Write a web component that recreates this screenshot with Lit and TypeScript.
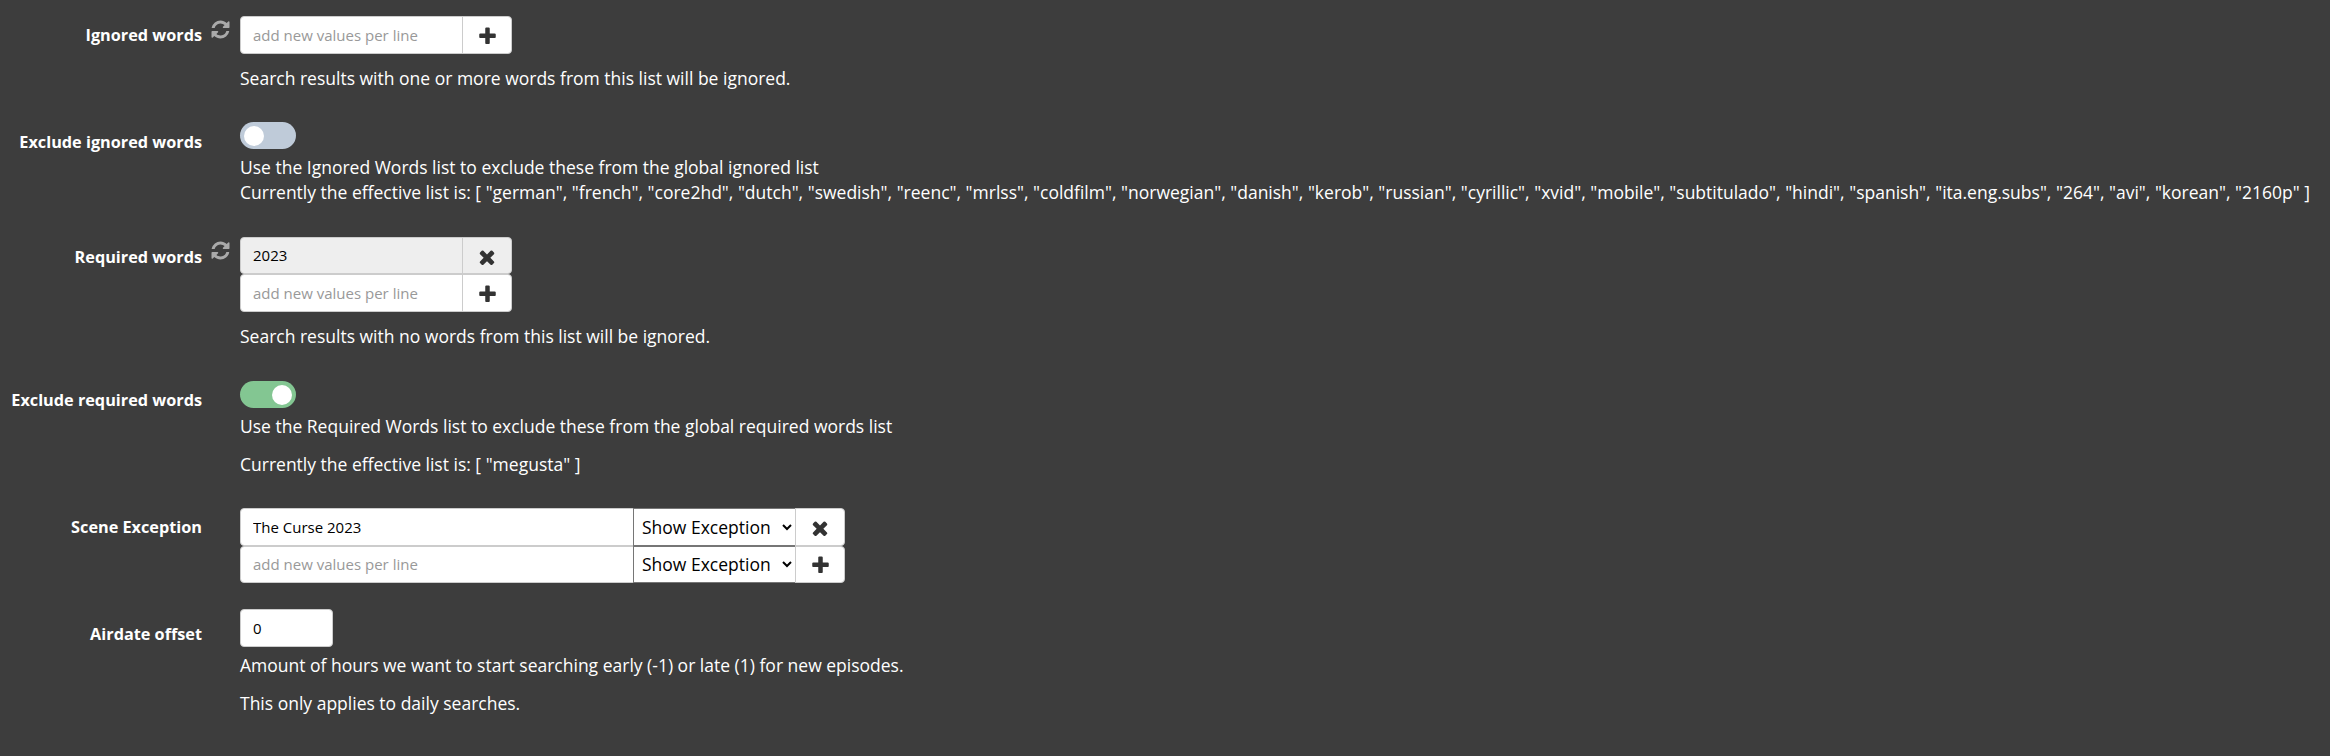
import { LitElement, html, css, svg } from "lit";
import { customElement } from "lit/decorators.js";

const PLUS = svg`<path d="M1600 736v192q0 40-28 68t-68 28h-416v416q0 40-28 68t-68 28h-192q-40 0-68-28t-28-68v-416h-416q-40 0-68-28t-28-68v-192q0-40 28-68t68-28h416v-416q0-40 28-68t68-28h192q40 0 68 28t28 68v416h416q40 0 68 28t28 68z"/>`;
const TIMES = svg`<path d="M1490 1322q0 40-28 68l-136 136q-28 28-68 28t-68-28l-294-294-294 294q-28 28-68 28t-68-28l-136-136q-28-28-28-68t28-68l294-294-294-294q-28-28-28-68t28-68l136-136q28-28 68-28t68 28l294 294 294-294q28-28 68-28t68 28l136 136q28 28 28 68t-28 68l-294 294 294 294q28 28 28 68z"/>`;
const REFRESH = svg`<path d="M1639 1056q0 5-1 7-64 268-268 434.5t-478 166.5q-146 0-282.5-55t-243.5-157l-129 129q-19 19-45 19t-45-19-19-45v-448q0-26 19-45t45-19h448q26 0 45 19t19 45-19 45l-137 137q71 66 161 102t187 36q134 0 250-65t186-179q11-17 53-117 8-23 30-23h192q13 0 22.5 9.5t9.5 22.5zm25-800v448q0 26-19 45t-45 19h-448q-26 0-45-19t-19-45 19-45l138-138q-148-137-349-137-134 0-250 65t-186 179q-11 17-53 117-8 23-30 23h-199q-13 0-22.5-9.5t-9.5-22.5v-7q65-268 270-434.5t480-166.5q146 0 284 55.5t245 156.5l130-129q19-19 45-19t45 19 19 45z"/>`;

const icon = (p: unknown, cls = "") => html`<svg class="ico ${cls}" viewBox="0 0 1792 1792" fill="currentColor">${p}</svg>`;

@customElement("app-root")
export class AppRoot extends LitElement {
  static styles = css`
    :host {
      display: block;
      min-height: 756px;
      background: #3d3d3d;
      color: #fff;
      font-family: "Open Sans", sans-serif;
      font-size: 17.5px;
      line-height: 25px;
      padding-top: 16px;
      box-sizing: border-box;
    }
    .row {
      display: grid;
      grid-template-columns: 202px 38px 1fr;
      margin-bottom: 31.5px;
    }
    .row.r3 { margin-bottom: 32.5px; }
    .row.r4 { margin-bottom: 31px; }
    .row.tight { margin-bottom: 26px; }
    .label {
      text-align: right;
      font-weight: 700;
      font-size: 16.25px;
      margin-top: 7px;
      white-space: nowrap;
    }
    .label.m8 { margin-top: 8px; }
    .label.low { margin-top: 12.5px; }
    .gutter { position: relative; color: #aaa; }
    .sync { position: absolute; left: 7.5px; top: 3px; width: 21px; height: 21px; }
    .sync .ico { display: block; width: 21px; height: 21px; }
    .stack { display: flex; flex-direction: column; width: 272px; }
    .stack.wide { width: 605px; }
    .group {
      display: flex;
      height: 37.5px;
      box-sizing: border-box;
      border-radius: 4px;
      background: #fff;
      border: 1px solid #ccc;
    }
    .group.filled { background: #eee; }
    .group input {
      flex: 1;
      min-width: 0;
      border: 0;
      outline: 0;
      padding: 0 12px;
      background: transparent;
      font: 15px "Open Sans", sans-serif;
      color: #000;
    }
    input::placeholder { color: #999; opacity: 1; }
    .group select {
      width: 162px;
      margin: -1px 0;
      border: 1px solid #767676;
      border-right: 0;
      border-radius: 0;
      background: #fff;
      color: #000;
      padding: 0 0 0 4px;
      font: 17.5px "Open Sans", sans-serif;
      outline: 0;
    }
    .btn {
      width: 49px;
      flex: none;
      display: flex;
      align-items: center;
      justify-content: center;
      border-left: 1px solid #ccc;
      color: #333;
      box-sizing: border-box;
      padding-top: 3px;
    }
    .btn .ico { width: 21px; height: 21px; }
    .btn .ico.x { width: 22px; height: 22px; }
    .help { margin: 12px 0 0; white-space: nowrap; }
    .help.near { margin-top: 6px; }
    .help.para { margin-top: 13px; }
    .help.line { margin-top: 0; }
    .toggle {
      width: 56px;
      height: 27px;
      border-radius: 14px;
      background: #bfcbd9;
      position: relative;
    }
    .toggle::after {
      content: "";
      position: absolute;
      top: 3.5px;
      left: 4px;
      width: 20px;
      height: 20px;
      border-radius: 50%;
      background: #fff;
    }
    .toggle.on { background: #83c692; }
    .toggle.on::after { left: 32px; }
    .offset {
      display: block;
      width: 93px;
      height: 38px;
      box-sizing: border-box;
      border: 1px solid #ccc;
      border-radius: 4px;
      background: #fff;
      padding: 0 12px;
      font: 15px "Open Sans", sans-serif;
      color: #000;
      outline: 0;
      appearance: textfield;
    }
  `;

  private words(values: string[]) {
    return html`<div class="stack">
      ${values.map(
        (v) => html`<div class="group filled"><input .value=${v} /><span class="btn">${icon(TIMES, "x")}</span></div>`
      )}
      <div class="group"><input placeholder="add new values per line" /><span class="btn">${icon(PLUS)}</span></div>
    </div>`;
  }

  private excRow(value: string, placeholder: string, ic: unknown, cls = "") {
    return html`<div class="group">
      <input .value=${value} placeholder=${placeholder} />
      <select><option>Show Exception</option></select>
      <span class="btn">${icon(ic, cls)}</span>
    </div>`;
  }

  render() {
    return html`
      <div class="row">
        <div class="label">Ignored words</div>
        <div class="gutter"><span class="sync">${icon(REFRESH)}</span></div>
        <div>
          ${this.words([])}
          <p class="help">Search results with one or more words from this list will be ignored.</p>
        </div>
      </div>
      <div class="row">
        <div class="label m8">Exclude ignored words</div>
        <div class="gutter"></div>
        <div>
          <div class="toggle"></div>
          <p class="help near">Use the Ignored Words list to exclude these from the global ignored list</p>
          <p class="help line">Currently the effective list is: [ "german", "french", "core2hd", "dutch", "swedish", "reenc", "mrlss", "coldfilm", "norwegian", "danish", "kerob", "russian", "cyrillic", "xvid", "mobile", "subtitulado", "hindi", "spanish", "ita.eng.subs", "264", "avi", "korean", "2160p" ]</p>
        </div>
      </div>
      <div class="row r3">
        <div class="label m8">Required words</div>
        <div class="gutter"><span class="sync">${icon(REFRESH)}</span></div>
        <div>
          ${this.words(["2023"])}
          <p class="help">Search results with no words from this list will be ignored.</p>
        </div>
      </div>
      <div class="row r4">
        <div class="label">Exclude required words</div>
        <div class="gutter"></div>
        <div>
          <div class="toggle on"></div>
          <p class="help near">Use the Required Words list to exclude these from the global required words list</p>
          <p class="help para">Currently the effective list is: [ "megusta" ]</p>
        </div>
      </div>
      <div class="row tight">
        <div class="label">Scene Exception</div>
        <div class="gutter"></div>
        <div class="stack wide">
          ${this.excRow("The Curse 2023", "", TIMES, "x")}
          ${this.excRow("", "add new values per line", PLUS)}
        </div>
      </div>
      <div class="row">
        <div class="label low">Airdate offset</div>
        <div class="gutter"></div>
        <div>
          <input class="offset" type="number" value="0" />
          <p class="help near">Amount of hours we want to start searching early (-1) or late (1) for new episodes.</p>
          <p class="help para">This only applies to daily searches.</p>
        </div>
      </div>
    `;
  }
}
